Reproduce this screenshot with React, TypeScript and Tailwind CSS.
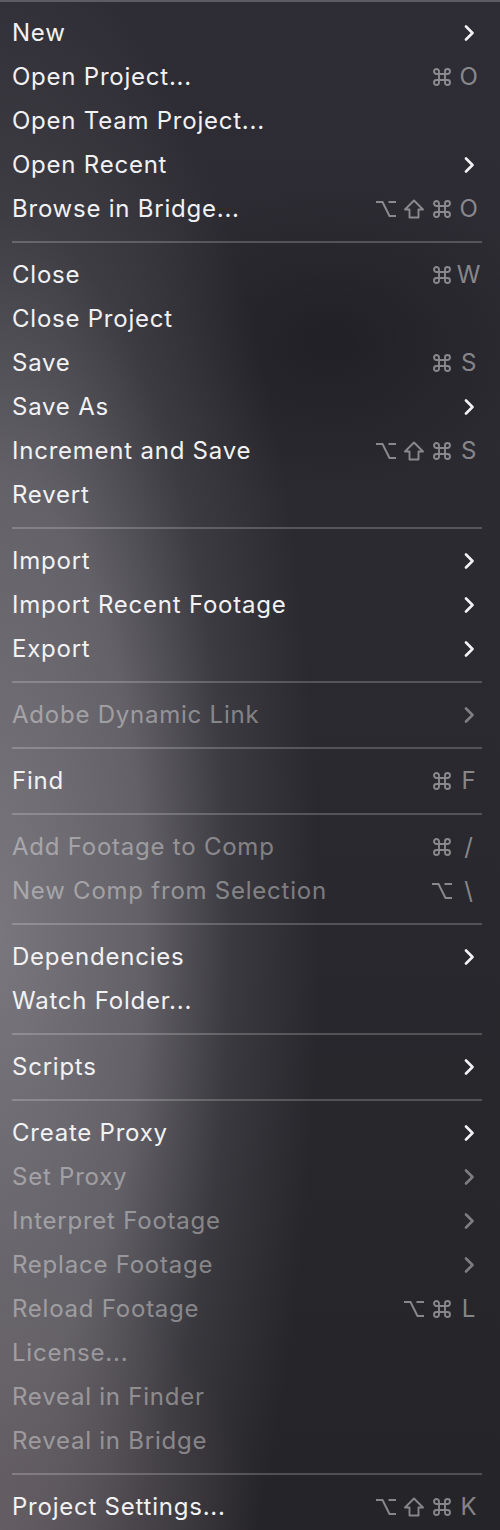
import React from 'react';

type Item =
  | { sep: true }
  | {
      sep?: false;
      label: string;
      disabled?: boolean;
      submenu?: boolean;
      mods?: string;
      keyChar?: string;
    };

const items: Item[] = [
  { label: 'New', submenu: true },
  { label: 'Open Project...', mods: 'c', keyChar: 'O' },
  { label: 'Open Team Project...' },
  { label: 'Open Recent', submenu: true },
  { label: 'Browse in Bridge...', mods: 'asc', keyChar: 'O' },
  { sep: true },
  { label: 'Close', mods: 'c', keyChar: 'W' },
  { label: 'Close Project' },
  { label: 'Save', mods: 'c', keyChar: 'S' },
  { label: 'Save As', submenu: true },
  { label: 'Increment and Save', mods: 'asc', keyChar: 'S' },
  { label: 'Revert' },
  { sep: true },
  { label: 'Import', submenu: true },
  { label: 'Import Recent Footage', submenu: true },
  { label: 'Export', submenu: true },
  { sep: true },
  { label: 'Adobe Dynamic Link', submenu: true, disabled: true },
  { sep: true },
  { label: 'Find', mods: 'c', keyChar: 'F' },
  { sep: true },
  { label: 'Add Footage to Comp', mods: 'c', keyChar: '/', disabled: true },
  { label: 'New Comp from Selection', mods: 'a', keyChar: '\\', disabled: true },
  { sep: true },
  { label: 'Dependencies', submenu: true },
  { label: 'Watch Folder...' },
  { sep: true },
  { label: 'Scripts', submenu: true },
  { sep: true },
  { label: 'Create Proxy', submenu: true },
  { label: 'Set Proxy', submenu: true, disabled: true },
  { label: 'Interpret Footage', submenu: true, disabled: true },
  { label: 'Replace Footage', submenu: true, disabled: true },
  { label: 'Reload Footage', mods: 'ac', keyChar: 'L', disabled: true },
  { label: 'License...', disabled: true },
  { label: 'Reveal in Finder', disabled: true },
  { label: 'Reveal in Bridge', disabled: true },
  { sep: true },
  { label: 'Project Settings...', mods: 'asc', keyChar: 'K' },
];

function CommandGlyph() {
  return (
    <svg width="20" height="20" viewBox="0 0 20 20" fill="none" stroke="currentColor" strokeWidth="1.9">
      <path d="M7 7V4.5A2.5 2.5 0 1 0 4.5 7H15.5A2.5 2.5 0 1 0 13 4.5V15.5A2.5 2.5 0 1 0 15.5 13H4.5A2.5 2.5 0 1 0 7 15.5Z" />
    </svg>
  );
}

function ShiftGlyph() {
  return (
    <svg width="22" height="20" viewBox="0 0 22 20" fill="none" stroke="currentColor" strokeWidth="1.9" strokeLinejoin="round">
      <path d="M11 1.5L20 10.5H15.5V18.5H6.5V10.5H2Z" />
    </svg>
  );
}

function OptionGlyph() {
  return (
    <svg width="22" height="18" viewBox="0 0 22 18" fill="none" stroke="currentColor" strokeWidth="2">
      <path d="M1 2H7.5L14.5 16H21M13.5 2H21" />
    </svg>
  );
}

function Chevron({ dim }: { dim?: boolean }) {
  return (
    <svg
      width="10"
      height="16"
      viewBox="0 0 10 16"
      fill="none"
      stroke="currentColor"
      strokeWidth="2.6"
      strokeLinecap="round"
      strokeLinejoin="round"
      className={dim ? 'text-white/40' : 'text-[#f2f2f4]'}
    >
      <path d="M2 1.5L8.5 8L2 14.5" />
    </svg>
  );
}

function Shortcut({ mods, keyChar }: { mods: string; keyChar: string }) {
  return (
    <div className="flex items-center text-white/45">
      {mods.split('').map((m, i) => (
        <span key={i} className="w-[28px] flex justify-center">
          {m === 'a' ? <OptionGlyph /> : m === 's' ? <ShiftGlyph /> : <CommandGlyph />}
        </span>
      ))}
      <span className="w-[26px] text-center">{keyChar}</span>
    </div>
  );
}

export default function App() {
  return (
    <div
      className="w-[500px] h-[1530px] overflow-hidden border-t-2 border-[#5d5c63] pt-[9px] bg-[#29282e] bg-[radial-gradient(ellipse_260px_260px_at_0px_1530px,rgba(120,108,114,0.55)_0%,rgba(120,108,114,0)_100%),radial-gradient(ellipse_320px_1000px_at_0px_930px,rgba(132,130,136,0.88)_0%,rgba(118,116,122,0.75)_45%,rgba(84,83,89,0.42)_72%,rgba(41,40,46,0)_100%),radial-gradient(ellipse_220px_160px_at_330px_340px,rgba(20,19,24,0.45)_0%,rgba(20,19,24,0)_100%),linear-gradient(to_bottom,#2e2d35_0%,#2a292f_50%,#252429_100%)] text-[24px] leading-none tracking-[0.032em]"
      style={{ fontFamily: 'Inter, "Noto Sans", "DejaVu Sans", sans-serif' }}
    >
      {items.map((item, i) =>
        item.sep ? (
          <div key={i} className="h-[22px] flex items-center ml-[12px] mr-[18px]">
            <div className="h-[2px] w-full bg-white/20" />
          </div>
        ) : (
          <div key={i} className="h-[44px] flex items-center pl-[12px] pr-[18px]">
            <span className={`flex-1 ${item.disabled ? 'text-white/40' : 'text-[#f2f2f4]'}`}>
              {item.label}
            </span>
            {item.mods && item.keyChar && <Shortcut mods={item.mods} keyChar={item.keyChar} />}
            {item.submenu && (
              <span className="w-[26px] flex justify-center">
                <Chevron dim={item.disabled} />
              </span>
            )}
          </div>
        )
      )}
    </div>
  );
}
